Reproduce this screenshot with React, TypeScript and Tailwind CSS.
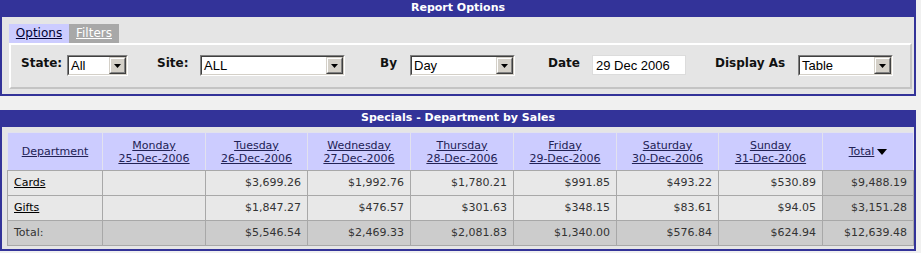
import React from "react";

const verdana = { fontFamily: '"DejaVu Sans", Verdana, sans-serif' };

function Combo({ w, text }: { w: number; text: string }) {
  return (
    <div
      className="h-[21px] border border-t-[#808080] border-l-[#808080] border-b-white border-r-white"
      style={{ width: w }}
    >
      <div className="flex h-full border border-t-[#404040] border-l-[#404040] border-b-[#d4d0c8] border-r-[#d4d0c8] bg-white">
        <div
          className="flex-1 pl-[2px] text-[13px] leading-[17px] text-black"
          style={{ fontFamily: '"Liberation Sans", Arial, sans-serif' }}
        >
          {text}
        </div>
        <div className="w-[17px] h-full border border-t-[#d4d0c8] border-l-[#d4d0c8] border-b-[#404040] border-r-[#404040]">
          <div className="flex h-full items-center justify-center border border-t-white border-l-white border-b-[#808080] border-r-[#808080] bg-[#d4d0c8]">
            <svg width="7" height="4" viewBox="0 0 7 4">
              <polygon points="0,0 7,0 3.5,4" fill="#000" />
            </svg>
          </div>
        </div>
      </div>
    </div>
  );
}

function Label({ children, cls }: { children: React.ReactNode; cls: string }) {
  return (
    <div className={`${cls} shrink-0 whitespace-nowrap text-[12px] font-bold text-[#111] leading-[14px] pt-[1px]`} style={verdana}>
      {children}
    </div>
  );
}

const days = [
  ["Monday", "25-Dec-2006"],
  ["Tuesday", "26-Dec-2006"],
  ["Wednesday", "27-Dec-2006"],
  ["Thursday", "28-Dec-2006"],
  ["Friday", "29-Dec-2006"],
  ["Saturday", "30-Dec-2006"],
  ["Sunday", "31-Dec-2006"],
];

const widths = [95, 103, 102, 103, 103, 103, 102, 104, 91];

const rows: { name: string; link: boolean; vals: string[]; total: string }[] = [
  {
    name: "Cards",
    link: true,
    vals: ["", "$3,699.26", "$1,992.76", "$1,780.21", "$991.85", "$493.22", "$530.89"],
    total: "$9,488.19",
  },
  {
    name: "Gifts",
    link: true,
    vals: ["", "$1,847.27", "$476.57", "$301.63", "$348.15", "$83.61", "$94.05"],
    total: "$3,151.28",
  },
  {
    name: "Total:",
    link: false,
    vals: ["", "$5,546.54", "$2,469.33", "$2,081.83", "$1,340.00", "$576.84", "$624.94"],
    total: "$12,639.48",
  },
];

export default function App() {
  return (
    <div className="w-[921px] h-[253px] bg-[#f0f0f0] overflow-hidden" style={verdana}>
      {/* Report Options */}
      <div className="w-[916px] border-2 border-t-0 border-[#333399] bg-[#e5e5e5]">
        <div className="h-[17px] bg-[#333399] text-center text-[11px] font-bold text-white leading-[16px]">
          Report Options
        </div>
        <div className="pt-[7px] pl-[7px] pr-[2px] pb-[5px]">
          <div className="flex h-[19px]">
            <div className="w-[60px] text-center bg-[#ccccff] text-[12px] leading-[19px] text-[#000033] underline">Options</div>
            <div className="w-[50px] text-center bg-[#a8a8a8] text-[12px] leading-[19px] text-white underline">Filters</div>
          </div>
          <div className="h-[46px] border-2 border-t-white border-l-white border-r-[#c4c4c4] border-b-[#c4c4c4] flex items-start pt-[10px]">
            <Label cls="ml-[10px] w-[46px]">State:</Label>
            <Combo w={61} text="All" />
            <Label cls="ml-[29px] w-[43px]">Site:</Label>
            <Combo w={145} text="ALL" />
            <Label cls="ml-[35px] w-[30px]">By</Label>
            <Combo w={105} text="Day" />
            <Label cls="ml-[33px] w-[44px]">Date</Label>
            <div
              className="w-[94px] h-[20px] bg-white border border-[#dcdcdc] pl-[3px] text-[13px] leading-[19px] text-black"
              style={{ fontFamily: '"Liberation Sans", Arial, sans-serif' }}
            >
              29 Dec 2006
            </div>
            <Label cls="ml-[29px] w-[83px]">Display As</Label>
            <Combo w={95} text="Table" />
          </div>
        </div>
      </div>

      {/* Specials */}
      <div className="mt-[14px] w-[916px] border-2 border-t-0 border-[#333399] bg-[#e5e5e5]">
        <div className="h-[17px] bg-[#333399] text-center text-[11px] font-bold text-white leading-[16px]">
          Specials - Department by Sales
        </div>
        <div className="pt-[5px] pl-[5px] pr-[1px] pb-[3px]">
          <table className="table-fixed border-collapse w-[906px] text-[11px]">
            <colgroup>
              {widths.map((w, i) => (
                <col key={i} style={{ width: w }} />
              ))}
            </colgroup>
            <thead>
              <tr className="h-[38px] bg-[#ccccff]">
                <th className="font-normal border border-[#e2e2ee] border-b-[#a8a8a8] text-center leading-[13px]">
                  <span className="underline text-[#222255]">Department</span>
                </th>
                {days.map(([d, dt]) => (
                  <th key={d} className="font-normal border border-[#e2e2ee] border-b-[#a8a8a8] text-center leading-[13px] text-[#222255]">
                    <div className="underline">{d}</div>
                    <div className="underline">{dt}</div>
                  </th>
                ))}
                <th className="font-normal border border-[#e2e2ee] border-b-[#a8a8a8] text-center leading-[13px] text-[#222255]">
                  <span className="inline-flex items-center gap-[3px]">
                    <span className="underline">Total</span>
                    <svg width="10" height="6" viewBox="0 0 10 6">
                      <polygon points="0,0 10,0 5,6" fill="#000" />
                    </svg>
                  </span>
                </th>
              </tr>
            </thead>
            <tbody>
              {rows.map((r) => {
                const isTotal = !r.link;
                const bg = isTotal ? "bg-[#cccccc]" : "bg-[#e8e8e8]";
                return (
                  <tr key={r.name} className="h-[25px]">
                    <td className={`${bg} border border-[#a8a8a8] px-[6px] text-left ${r.link ? "underline text-black" : "text-[#333]"}`}>
                      {r.name}
                    </td>
                    {r.vals.map((v, i) => (
                      <td key={i} className={`${bg} border border-[#a8a8a8] px-[6px] text-right text-[#333]`}>
                        {v}
                      </td>
                    ))}
                    <td className="bg-[#cccccc] border border-[#a8a8a8] px-[6px] text-right text-[#333]">{r.total}</td>
                  </tr>
                );
              })}
            </tbody>
          </table>
        </div>
      </div>
    </div>
  );
}
